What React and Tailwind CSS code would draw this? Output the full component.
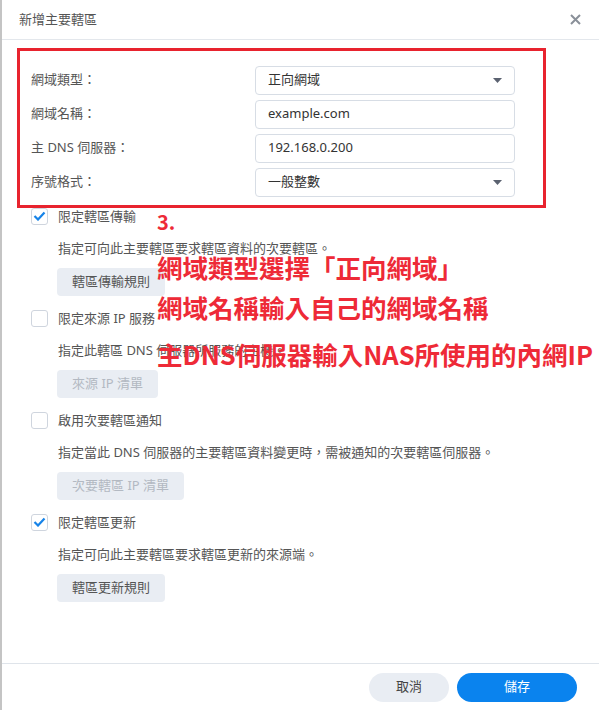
import React from "react";

const font = { fontFamily: '"Noto Sans", "Noto Sans CJK TC", sans-serif' };

const Caret = () => (
  <svg width="9" height="5" viewBox="0 0 9 5" className="shrink-0">
    <path d="M0 0h9L4.5 5z" fill="#5b6270" />
  </svg>
);

const Field = ({ label, value, select }) => (
  <div className="flex items-center h-[34px]">
    <div className="w-[224px] text-[13px] text-[#555]">{label}</div>
    <div className="flex items-center justify-between w-[260px] h-[29px] px-3 border border-[#d7dde5] rounded-[4px] text-[13px] text-[#333] bg-white">
      <span>{value}</span>
      {select && <Caret />}
    </div>
  </div>
);

const Checkbox = ({ checked }) => (
  <div className="w-[17px] h-[17px] rounded-[3px] border border-[#cfd5de] flex items-center justify-center bg-white">
    {checked && (
      <svg width="13" height="10" viewBox="0 0 13 10">
        <path d="M1.5 5l3.5 3.5L11.5 1.5" fill="none" stroke="#1683e8" strokeWidth="2.2" />
      </svg>
    )}
  </div>
);

const Section = ({ checked, label, desc, button, disabled }) => (
  <div className="flex flex-col">
    <div className="flex items-center gap-[10px] h-[18px]">
      <Checkbox checked={checked} />
      <span className="text-[13px] text-[#555] leading-[18px]">{label}</span>
    </div>
    <div className="pl-[27px] mt-[14px] h-[18px] text-[13px] text-[#555] leading-[18px]">{desc}</div>
    <div className="pl-[26px] mt-[11px]">
      <div
        className={`inline-flex items-center h-[28px] px-[15px] rounded-[4px] bg-[#e9edf3] text-[13px] ${
          disabled ? "text-[#b3b9c2]" : "text-[#555]"
        }`}
      >
        {button}
      </div>
    </div>
  </div>
);

export default function App() {
  return (
    <div className="relative w-[599px] h-[710px] bg-white border-l-2 border-[#c4c4c4] flex flex-col overflow-hidden" style={font}>
      {/* header */}
      <div className="flex items-center justify-between h-[40px] pl-[17px] pr-[18px] border-b border-[#e3e7ec]">
        <span className="text-[13px] text-[#555]">新增主要轄區</span>
        <svg width="11" height="11" viewBox="0 0 11 11">
          <path d="M1 1l9 9M10 1l-9 9" stroke="#8a9099" strokeWidth="2" />
        </svg>
      </div>

      <div className="flex-1 flex flex-col pl-[29px] pt-[8px]">
        {/* fields */}
        <div className="-ml-[14px] w-[529px] border-[3px] border-[#e8232e] pl-[11px] pt-[12px] pb-[6px]">
          <Field label="網域類型：" value="正向網域" select />
          <Field label="網域名稱：" value="example.com" />
          <Field label="主 DNS 伺服器：" value="192.168.0.200" />
          <Field label="序號格式：" value="一般整數" select />
        </div>

        <div className="flex flex-col gap-[13px] -mt-[1px]">
          <Section checked label="限定轄區傳輸" desc="指定可向此主要轄區要求轄區資料的次要轄區。" button="轄區傳輸規則" />
          <Section label="限定來源 IP 服務" desc="指定此轄區 DNS 伺服器所服務的主機。" button="來源 IP 清單" disabled />
          <Section
            label="啟用次要轄區通知"
            desc="指定當此 DNS 伺服器的主要轄區資料變更時，需被通知的次要轄區伺服器。"
            button="次要轄區 IP 清單"
            disabled
          />
          <Section checked label="限定轄區更新" desc="指定可向此主要轄區要求轄區更新的來源端。" button="轄區更新規則" />
        </div>
      </div>

      {/* footer */}
      <div className="h-[47px] border-t border-[#dfe4ea] flex items-center justify-end gap-[8px] pr-[22px]">
        <div className="w-[80px] h-[29px] rounded-full bg-[#e9edf3] flex items-center justify-center text-[13px] text-[#444]">取消</div>
        <div className="w-[120px] h-[29px] rounded-full bg-[#0a83ee] flex items-center justify-center text-[13px] text-white">儲存</div>
      </div>

      {/* annotation overlay */}
      <div
        className="absolute left-[155px] top-[212px] flex flex-col text-[#ee2a37] font-bold leading-none"
        style={{ fontFamily: '"Noto Sans CJK TC", "Noto Sans", sans-serif' }}
      >
        <span className="text-[20px]">3.</span>
        <span className="text-[25.5px] mt-[22px]">網域類型選擇「正向網域」</span>
        <span className="text-[25.5px] mt-[14px]">網域名稱輸入自己的網域名稱</span>
        <span className="text-[25.5px] mt-[22px]">主DNS伺服器輸入NAS所使用的內網IP</span>
      </div>
    </div>
  );
}
